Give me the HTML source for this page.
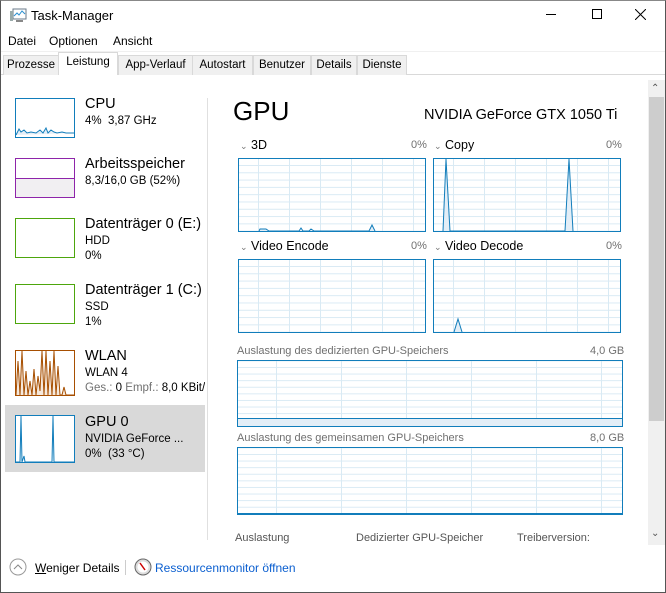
<!DOCTYPE html>
<html><head><meta charset="utf-8"><style>
*{margin:0;padding:0;box-sizing:border-box}
body{width:666px;height:593px;overflow:hidden;background:#fff;font-family:"Liberation Sans",sans-serif;color:#000;position:relative}
.a{position:absolute;white-space:nowrap}
.win{position:absolute;left:0;top:0;width:666px;height:593px;border:1px solid #555;border-top:1px solid #888}
.tab{position:absolute;top:55px;height:20px;background:#f0f0f0;border:1px solid #d9d9d9;border-bottom:none;font-size:11.5px;padding:3px 0 0;text-align:center;white-space:nowrap;overflow:hidden}
.ch{position:absolute;border:1px solid #117dbb;
background-image:linear-gradient(#d9eaf4 1px,transparent 1px),linear-gradient(90deg,#d9eaf4 1px,transparent 1px);
background-size:100% 7.3px,31px 100%}
.th{position:absolute;width:60px;background:#fff}
.s1{font-size:14.5px}
.s2{font-size:11.5px}
.lab{font-size:12.5px}
.pc{font-size:11px;color:#707070}
.g{font-size:11px;color:#707070}
.clip{position:absolute;left:0;top:0;width:205px;height:593px;overflow:hidden}
</style></head><body>
<div class="win"></div>
<svg class="a" style="left:9px;top:8px" width="18" height="16" viewBox="0 0 18 16"><rect x="4" y="1" width="13" height="10" fill="#fff" stroke="#6a7a8a"/><polyline points="5,8 8,5 10,7 13,3 16,6" fill="none" stroke="#2a8fd0"/><rect x="1" y="3" width="3" height="10" fill="#9aa"/><rect x="7" y="12" width="7" height="2" fill="#888"/></svg>
<div class="a" style="left:31px;top:8px;font-size:13px">Task-Manager</div>
<div class="a" style="left:546px;top:14px;width:10px;height:1px;background:#000"></div>
<div class="a" style="left:592px;top:9px;width:10px;height:10px;border:1px solid #000"></div>
<svg class="a" style="left:635px;top:9px" width="11" height="11"><path d="M0 0L11 11M11 0L0 11" stroke="#000"/></svg>
<div class="a" style="left:8px;top:34px;font-size:12px">Datei</div>
<div class="a" style="left:49px;top:34px;font-size:12px">Optionen</div>
<div class="a" style="left:113px;top:34px;font-size:12px">Ansicht</div>
<div class="a" style="left:1px;top:51px;width:664px;height:24px;background:#fff;border-top:1px solid #f0f0f0"></div>
<div class="a" style="left:1px;top:74px;width:664px;height:1px;background:#d9d9d9"></div>
<div class="tab" style="left:3px;width:56px">Prozesse</div>
<div class="tab" style="left:58px;top:52px;height:23px;width:60px;background:#fff">Leistung</div>
<div class="tab" style="left:118px;width:75px">App-Verlauf</div>
<div class="tab" style="left:192px;width:61px">Autostart</div>
<div class="tab" style="left:253px;width:58px">Benutzer</div>
<div class="tab" style="left:311px;width:46px">Details</div>
<div class="tab" style="left:357px;width:50px">Dienste</div>
<div class="clip">
<div class="a" style="left:5px;top:405px;width:200px;height:67px;background:#d9d9d9"></div>
<div class="th" style="left:15px;top:98px;height:40px;border:1px solid #117dbb"><svg width="58" height="38" style="position:absolute;left:0;top:0"><polyline points="0,36 3,30 5,33 8,31 11,34 15,33 20,34 24,31 27,34 30,29 32,34 35,31 38,33 41,34 46,33 50,34 58,34" fill="#e3eef7" stroke="#117dbb"/></svg></div>
<div class="a s1" style="left:85px;top:96px">CPU</div><div class="a s2" style="left:85px;top:115px">4%&nbsp; 3,87 GHz</div>
<div class="th" style="left:15px;top:158px;height:40px;border:1px solid #8e24aa"><div style="position:absolute;left:0;right:0;bottom:0;height:19px;background:#f1eff2;border-top:1px solid #8e24aa"></div></div>
<div class="a s1" style="left:85px;top:156px">Arbeitsspeicher</div><div class="a s2" style="left:85px;top:175px">8,3/16,0 GB (52%)</div>
<div class="th" style="left:15px;top:218px;height:40px;border:1px solid #4da60c"></div>
<div class="a s1" style="left:85px;top:216px">Datenträger 0 (E:)</div><div class="a s2" style="left:85px;top:235px">HDD</div><div class="a s2" style="left:85px;top:250px">0%</div>
<div class="th" style="left:15px;top:284px;height:40px;border:1px solid #4da60c"></div>
<div class="a s1" style="left:85px;top:282px">Datenträger 1 (C:)</div><div class="a s2" style="left:85px;top:301px">SSD</div><div class="a s2" style="left:85px;top:316px">1%</div>
<div class="th" style="left:15px;top:350px;height:46px;border:1px solid #a74f01"><svg width="58" height="44" style="position:absolute;left:0;top:0"><polyline points="0,44 2,10 4,44 6,0 8,44 10,20 12,44 14,30 16,44 18,18 20,44 22,25 24,40 26,0 28,44 30,0 32,44 34,10 36,44 38,0 40,44 42,15 44,44 46,44 48,36 50,44 58,44" fill="#f6e9dd" stroke="#a74f01"/></svg></div>
<div class="a s1" style="left:85px;top:348px">WLAN</div><div class="a s2" style="left:85px;top:367px">WLAN 4</div><div class="a s2" style="left:85px;top:382px"><span style="color:#707070">Ges.:</span> 0 <span style="color:#707070">Empf.:</span> 8,0 KBit/s</div>
<div class="th" style="left:15px;top:415px;height:48px;border:1px solid #117dbb"><svg width="58" height="46" style="position:absolute;left:0;top:0"><polyline points="0,46 4,46 5,0 6,46 8,40 9,46 36,46 37,0 38,46 58,46" fill="none" stroke="#117dbb"/></svg></div>
<div class="a s1" style="left:85px;top:414px">GPU 0</div><div class="a s2" style="left:85px;top:433px">NVIDIA GeForce ...</div><div class="a s2" style="left:85px;top:448px">0%&nbsp; (33 °C)</div>
</div>
<div class="a" style="left:207px;top:98px;width:1px;height:442px;background:#e0e0e0"></div>
<div class="a" style="left:233px;top:96px;font-size:26px">GPU</div>
<div class="a" style="left:424px;top:107px;font-size:14.5px">NVIDIA GeForce GTX 1050 Ti</div>
<div class="a lab" style="left:240px;top:138px"><span style="color:#777;font-size:9px">&#8964;</span> 3D</div><div class="a pc" style="left:411px;top:139px">0%</div>
<div class="a lab" style="left:434px;top:138px"><span style="color:#777;font-size:9px">&#8964;</span> Copy</div><div class="a pc" style="left:606px;top:139px">0%</div>
<div class="ch" style="left:238px;top:158px;width:188px;height:74px;background-position:0 6px,19px 0"><svg width="186" height="72" style="position:absolute;left:0;top:0"><polyline points="20,72 21,70 27,70 30,72 60,72 62,69 64,72 70,72 72,70 75,72 130,72 133,66 136,72" fill="#e3eef7" stroke="#117dbb"/></svg></div>
<div class="ch" style="left:433px;top:158px;width:188px;height:74px;background-position:0 6px,19px 0"><svg width="186" height="72" style="position:absolute;left:0;top:0"><polyline points="9,72 12,0 16,72 131,72 135,0 139,72" fill="#e3eef7" stroke="#117dbb"/></svg></div>
<div class="a lab" style="left:240px;top:239px"><span style="color:#777;font-size:9px">&#8964;</span> Video Encode</div><div class="a pc" style="left:411px;top:240px">0%</div>
<div class="a lab" style="left:434px;top:239px"><span style="color:#777;font-size:9px">&#8964;</span> Video Decode</div><div class="a pc" style="left:606px;top:240px">0%</div>
<div class="ch" style="left:238px;top:259px;width:188px;height:74px;background-position:0 6px,19px 0"></div>
<div class="ch" style="left:433px;top:259px;width:188px;height:74px;background-position:0 6px,19px 0"><svg width="186" height="72" style="position:absolute;left:0;top:0"><polyline points="20,72 24,59 28,72" fill="#e3eef7" stroke="#117dbb"/></svg></div>
<div class="a g" style="left:237px;top:345px">Auslastung des dedizierten GPU-Speichers</div><div class="a g" style="left:590px;top:345px">4,0 GB</div>
<div class="ch" style="left:237px;top:360px;width:386px;height:67px;background-size:100% 6.6px,65px 100%;background-position:0 6px,38px 0"><div style="position:absolute;left:0;right:0;bottom:0;height:8px;background:#e3eef7;border-top:1px solid #117dbb"></div></div>
<div class="a g" style="left:237px;top:432px">Auslastung des gemeinsamen GPU-Speichers</div><div class="a g" style="left:590px;top:432px">8,0 GB</div>
<div class="ch" style="left:237px;top:447px;width:386px;height:68px;border-bottom-width:2px;background-size:100% 6.6px,65px 100%;background-position:0 6px,38px 0"></div>
<div class="a g" style="left:235px;top:532px;color:#555">Auslastung</div>
<div class="a g" style="left:356px;top:532px;color:#555">Dedizierter GPU-Speicher</div>
<div class="a g" style="left:517px;top:532px;color:#555">Treiberversion:</div>
<div class="a" style="left:1px;top:544px;width:646px;height:4px;background:#fff"></div>
<div class="a" style="left:648px;top:80px;width:17px;height:465px;background:#f0f0f0"></div>
<div class="a" style="left:649px;top:97px;width:15px;height:324px;background:#cdcdcd"></div>
<div class="a" style="left:651px;top:83px;font-size:10px;color:#555">&#8963;</div>
<div class="a" style="left:651px;top:528px;font-size:10px;color:#555">&#8964;</div>
<svg class="a" style="left:9px;top:558px" width="18" height="18"><circle cx="9" cy="9" r="8" fill="#fff" stroke="#999"/><path d="M5 11L9 7L13 11" fill="none" stroke="#888"/></svg>
<div class="a s2" style="left:35px;top:561px;font-size:12px"><u>W</u>eniger Details</div>
<div class="a" style="left:125px;top:560px;width:1px;height:15px;background:#ccc"></div>
<svg class="a" style="left:134px;top:558px" width="18" height="18"><circle cx="9" cy="9" r="8" fill="#ddd" stroke="#666"/><circle cx="9" cy="9" r="5.5" fill="#fff"/><path d="M6 5L11 12" stroke="#c00" stroke-width="1.5"/></svg>
<div class="a s2" style="left:155px;top:561px;color:#0b5fd0;font-size:12px">Ressourcenmonitor öffnen</div>
</body></html>
